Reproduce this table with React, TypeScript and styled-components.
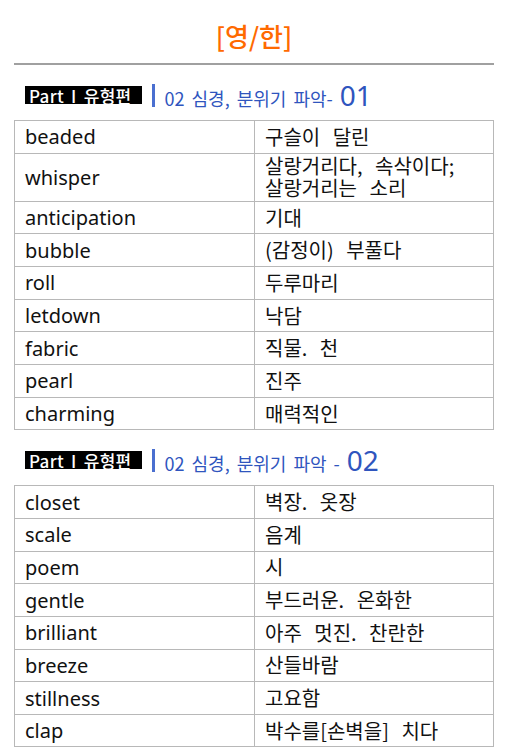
import styled, { createGlobalStyle } from 'styled-components';

interface Word {
    en: string;
    ko: string[];
}

const section1: Word[] = [
    { en: 'beaded', ko: ['구슬이 달린'] },
    { en: 'whisper', ko: ['살랑거리다, 속삭이다;', '살랑거리는 소리'] },
    { en: 'anticipation', ko: ['기대'] },
    { en: 'bubble', ko: ['(감정이) 부풀다'] },
    { en: 'roll', ko: ['두루마리'] },
    { en: 'letdown', ko: ['낙담'] },
    { en: 'fabric', ko: ['직물. 천'] },
    { en: 'pearl', ko: ['진주'] },
    { en: 'charming', ko: ['매력적인'] },
];

const section2: Word[] = [
    { en: 'closet', ko: ['벽장. 옷장'] },
    { en: 'scale', ko: ['음계'] },
    { en: 'poem', ko: ['시'] },
    { en: 'gentle', ko: ['부드러운. 온화한'] },
    { en: 'brilliant', ko: ['아주 멋진. 찬란한'] },
    { en: 'breeze', ko: ['산들바람'] },
    { en: 'stillness', ko: ['고요함'] },
    { en: 'clap', ko: ['박수를[손벽을] 치다'] },
];

const GlobalStyle = createGlobalStyle`
    body {
        margin: 0;
        background: #ffffff;
        font-family: 'Noto Sans', 'Noto Sans CJK KR', sans-serif;
    }
`;

const SectionHeader: React.FC<{ label: string; num: string }> = ({ label, num }) => (
    <StyledHeader>
        <StyledBadge>Part I 유형편</StyledBadge>
        <StyledBar />
        <StyledHeading>
            {label}
            <StyledNum>{num}</StyledNum>
        </StyledHeading>
    </StyledHeader>
);

const WordTable: React.FC<{ words: Word[] }> = ({ words }) => (
    <StyledTable>
        {words.map((w) => (
            <StyledRow key={w.en} $tall={w.ko.length > 1}>
                <StyledEn>{w.en}</StyledEn>
                <StyledKo>
                    {w.ko.map((line) => (
                        <span key={line}>{line}</span>
                    ))}
                </StyledKo>
            </StyledRow>
        ))}
    </StyledTable>
);

const App: React.FC = () => {
    return (
        <StyledPage>
            <GlobalStyle />
            <StyledTitle>[영/한]</StyledTitle>
            <StyledRule />
            <SectionHeader label="02 심경, 분위기 파악- " num="01" />
            <WordTable words={section1} />
            <SectionHeader label="02 심경, 분위기 파악 - " num="02" />
            <WordTable words={section2} />
        </StyledPage>
    );
};

export default App;

const StyledPage = styled.div`
    width: 510px;
    padding: 14px 16px 0 14px;
    box-sizing: border-box;
    display: flex;
    flex-direction: column;
`;

const StyledTitle = styled.h1`
    margin: 0;
    height: 44px;
    text-align: center;
    font-family: 'Noto Sans CJK KR', sans-serif;
    font-size: 26px;
    font-weight: 500;
    line-height: 44px;
    color: #ff6a00;
`;

const StyledRule = styled.div`
    height: 2px;
    margin-top: 5px;
    background: #a0a0a0;
`;

const StyledHeader = styled.div`
    display: flex;
    align-items: center;
    height: 30px;
    padding-left: 11px;
    margin-top: 15px;
    margin-bottom: 10px;
`;

const StyledBadge = styled.div`
    display: flex;
    align-items: center;
    height: 18px;
    width: 117px;
    box-sizing: border-box;
    padding-left: 4px;
    background: #000000;
    color: #ffffff;
    font-family: 'Noto Sans CJK KR', sans-serif;
    font-size: 17px;
    font-weight: 500;
    letter-spacing: 0.3px;
    word-spacing: 3px;
    line-height: 1;
    white-space: nowrap;
`;

const StyledBar = styled.div`
    width: 2.5px;
    height: 23px;
    margin-left: 10px;
    margin-right: 10px;
    background: #4a6fd0;
`;

const StyledHeading = styled.div`
    color: #2f55be;
    font-family: 'Noto Sans CJK KR', sans-serif;
    font-size: 18px;
    word-spacing: 3px;
    white-space: pre;
    display: flex;
    align-items: baseline;
`;

const StyledNum = styled.span`
    font-family: 'Noto Sans', sans-serif;
    font-size: 28px;
    font-weight: 400;
    line-height: 30px;
    word-spacing: 0;
`;

const StyledTable = styled.div`
    display: flex;
    flex-direction: column;
    border: 1.5px solid #b8b8b8;
`;

const StyledRow = styled.div<{ $tall?: boolean }>`
    display: grid;
    grid-template-columns: 240px 1fr;
    height: ${(p) => (p.$tall ? '48px' : '32.7px')};
    border-bottom: 1.5px solid #b8b8b8;
    box-sizing: border-box;
    &:last-child {
        border-bottom: none;
        height: 31.4px;
    }
`;

const StyledEn = styled.div`
    display: flex;
    align-items: center;
    padding-left: 10px;
    font-family: 'Noto Sans', sans-serif;
    font-size: 20px;
    color: #111111;
    border-right: 1.5px solid #b8b8b8;
`;

const StyledKo = styled.div`
    display: flex;
    flex-direction: column;
    justify-content: center;
    padding-left: 10px;
    font-family: 'Noto Sans CJK KR', sans-serif;
    font-size: 20px;
    word-spacing: 8px;
    line-height: 22px;
    color: #111111;
    white-space: nowrap;
`;
